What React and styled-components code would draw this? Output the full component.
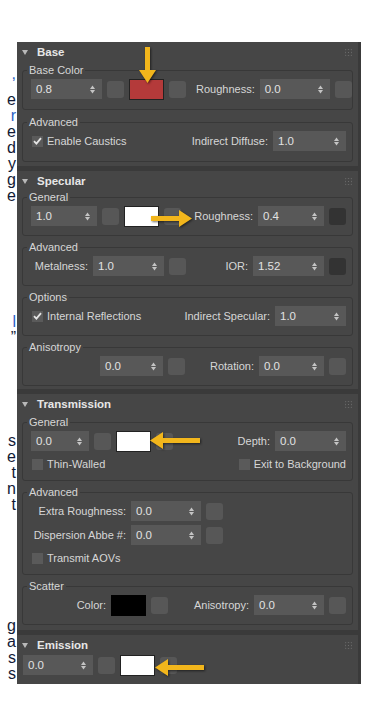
import React from 'react';
import styled, { createGlobalStyle } from 'styled-components';

const GlobalStyle = createGlobalStyle`
  html, body {
    margin: 0;
    padding: 0;
    background: #ffffff;
  }
  body {
    font-family: "Liberation Sans", Arial, sans-serif;
  }
`;

const Page = styled.div`
  display: flex;
  align-items: flex-start;
  width: 389px;
  height: 707px;
  overflow: hidden;
  background: #ffffff;
`;

// clipped right edge of the document text next to the screenshot
const Gutter = styled.div`
  flex: none;
  width: 17px;
  box-sizing: border-box;
  padding-right: 1px;
  overflow: hidden;
  font-size: 16px;
  line-height: 16px;
  color: #111a36;
  text-align: right;
`;

const Snippet = styled.div`
  margin-top: ${p => p.$top}px;
`;

const Char = styled.div`
  height: 16px;
  color: ${p => (p.$blue ? '#2a62c6' : 'inherit')};
`;

const Panel = styled.div`
  position: relative;
  flex: none;
  width: 344px;
  margin-top: 42px;
  box-sizing: border-box;
  background: #464646;
  border-right: 3px solid #3a3a3a;
  color: #d6d6d6;
  font-size: 11px;
`;

const Rollout = styled.section`
  padding: 0 5px ${p => p.$pb ?? 3}px 5px;
  border-top: ${p => (p.$first ? 'none' : '5px solid #3a3a3a')};
`;

const RolloutHeader = styled.header`
  display: flex;
  align-items: center;
  height: 20px;
  gap: 9px;
  font-weight: bold;
  font-size: 11.5px;
  color: #e6e6e6;
`;

const Caret = styled.span`
  width: 0;
  height: 0;
  border-left: 3px solid transparent;
  border-right: 3px solid transparent;
  border-top: 5px solid #b8b8b8;
`;

const Grip = styled.svg`
  margin-left: auto;
  margin-right: 1px;
`;

const Body = styled.div`
  display: flex;
  flex-direction: column;
  gap: ${p => p.$gap ?? 5}px;
  padding-top: ${p => p.$pt ?? 2}px;
`;

const Group = styled.fieldset`
  margin: 0;
  min-width: 0;
  border: 1px solid #383838;
  border-radius: 3px;
  padding: 3px 6px ${p => p.$pb ?? 9}px 8px;
  display: flex;
  flex-direction: column;
  gap: 4px;
`;

const Legend = styled.legend`
  margin-left: -4px;
  padding: 0 2px;
  line-height: 12px;
  color: #d6d6d6;
`;

const Row = styled.div`
  display: flex;
  align-items: center;
  gap: 5px;
  height: ${p => p.$h ?? 20}px;
  padding-left: ${p => p.$indent ?? 0}px;
`;

const Push = styled.div`
  flex: 1;
`;

const Label = styled.span`
  flex: none;
  width: ${p => (p.$w ? `${p.$w}px` : 'auto')};
  text-align: right;
  white-space: nowrap;
`;

const SpinBox = styled.div`
  flex: none;
  width: ${p => p.$w}px;
  height: 20px;
  box-sizing: border-box;
  display: flex;
  align-items: center;
  justify-content: space-between;
  padding: 0 7px 0 5px;
  background: #585858;
  color: #e2e2e2;
  font-size: 11.5px;
`;

const Knob = styled.div`
  flex: none;
  width: 17px;
  height: 17px;
  border-radius: 3px;
  background: ${p => (p.$dark ? '#333333' : '#575757')};
`;

const Swatch = styled.div`
  flex: none;
  width: 35px;
  height: 21px;
  box-sizing: border-box;
  background: ${p => p.$color};
  border: 1px solid ${p => (p.$color === '#000000' ? '#000000' : '#222222')};
`;

const CheckLabel = styled.label`
  display: flex;
  align-items: center;
  gap: 4px;
  white-space: nowrap;
  padding-left: 1px;
`;

const CheckBox = styled.span`
  flex: none;
  display: flex;
  align-items: center;
  justify-content: center;
  width: 11px;
  height: 11px;
  background: #5a5a5a;
`;

const Pointer = styled.svg`
  position: absolute;
  left: ${p => p.$x}px;
  top: ${p => p.$y}px;
  filter: drop-shadow(1px 1px 1px rgba(0, 0, 0, 0.55));
`;

const Spinner = ({ value, w }) => (
  <SpinBox $w={w}>
    <span>{value}</span>
    <svg width="5" height="9" viewBox="0 0 5 9">
      <polygon points="0,4 2.5,0.5 5,4" fill="#c4c4c4" />
      <polygon points="0,5 5,5 2.5,8.5" fill="#c4c4c4" />
    </svg>
  </SpinBox>
);

const Check = ({ label, checked }) => (
  <CheckLabel>
    <CheckBox>
      {checked && (
        <svg width="9" height="8" viewBox="0 0 9 8">
          <polyline points="1,4.2 3.4,6.6 8,1.2" fill="none" stroke="#e4e4e4" strokeWidth="1.8" />
        </svg>
      )}
    </CheckBox>
    {label}
  </CheckLabel>
);

const Header = ({ title }) => (
  <RolloutHeader>
    <Caret />
    {title}
    <Grip width="7" height="7" viewBox="0 0 7 7">
      {[0, 3, 6].map(x =>
        [0, 3, 6].map(y => <rect key={`${x}-${y}`} x={x} y={y} width="1" height="1" fill="#6c6c6c" />)
      )}
      <rect x="0" y="0" width="7" height="7" fill="none" stroke="#575757" strokeWidth="0.6" />
    </Grip>
  </RolloutHeader>
);

// yellow callout arrows laid over the screenshot
const Arrow = ({ dir, x, y, len }) => {
  const t = 5;
  const hw = 17;
  const hl = 13;
  const a = (hw - t) / 2;
  let pts;
  let w = len;
  let h = hw;
  if (dir === 'right') {
    pts = `0,${a} ${len - hl},${a} ${len - hl},0 ${len},${hw / 2} ${len - hl},${hw} ${len - hl},${a + t} 0,${a + t}`;
  } else if (dir === 'left') {
    pts = `${len},${a} ${hl},${a} ${hl},0 0,${hw / 2} ${hl},${hw} ${hl},${a + t} ${len},${a + t}`;
  } else {
    w = hw;
    h = len;
    pts = `${a},0 ${a + t},0 ${a + t},${len - hl} ${hw},${len - hl} ${hw / 2},${len} 0,${len - hl} ${a},${len - hl}`;
  }
  return (
    <Pointer $x={x} $y={y} width={w + 3} height={h + 3} viewBox={`0 0 ${w + 3} ${h + 3}`}>
      <polygon points={pts} fill="#f2b61c" />
    </Pointer>
  );
};

const gutterText = [
  { top: 66, chars: [[',', true]] },
  { top: 10, chars: [['e'], ['r', true], ['e'], ['d'], ['y'], ['g'], ['e']] },
  { top: 110, chars: [['l', true], ['”']] },
  { top: 87, chars: [['s'], ['e'], ['t'], ['n'], ['t']] },
  { top: 105, chars: [['g'], ['a'], ['s'], ['s']] },
];

const App = () => (
  <Page>
    <GlobalStyle />
    <Gutter>
      {gutterText.map((block, i) => (
        <Snippet key={i} $top={block.top}>
          {block.chars.map(([c, blue], j) => (
            <Char key={j} $blue={blue}>{c}</Char>
          ))}
        </Snippet>
      ))}
    </Gutter>

    <Panel>
      <Rollout $first $pb={4}>
        <Header title="Base" />
        <Body $gap={6}>
          <Group $pb={10}>
            <Legend>Base Color</Legend>
            <Row>
              <Spinner value="0.8" w={71} />
              <Knob />
              <Swatch $color="#b43a3a" />
              <Knob />
              <Push />
              <Label>Roughness:</Label>
              <Spinner value="0.0" w={70} />
              <Knob />
            </Row>
          </Group>
          <Group $pb={10}>
            <Legend>Advanced</Legend>
            <Row>
              <Check checked label="Enable Caustics" />
              <Push />
              <Label>Indirect Diffuse:</Label>
              <Spinner value="1.0" w={73} />
            </Row>
          </Group>
        </Body>
      </Rollout>

      <Rollout>
        <Header title="Specular" />
        <Body $pt={0}>
          <Group>
            <Legend>General</Legend>
            <Row>
              <Spinner value="1.0" w={66} />
              <Knob />
              <Swatch $color="#ffffff" />
              <Knob />
              <Push />
              <Label>Roughness:</Label>
              <Spinner value="0.4" w={66} />
              <Knob $dark />
            </Row>
          </Group>
          <Group>
            <Legend>Advanced</Legend>
            <Row>
              <Label $w={57}>Metalness:</Label>
              <Spinner value="1.0" w={71} />
              <Knob />
              <Push />
              <Label>IOR:</Label>
              <Spinner value="1.52" w={71} />
              <Knob $dark />
            </Row>
          </Group>
          <Group>
            <Legend>Options</Legend>
            <Row>
              <Check checked label="Internal Reflections" />
              <Push />
              <Label>Indirect Specular:</Label>
              <Spinner value="1.0" w={71} />
            </Row>
          </Group>
          <Group>
            <Legend>Anisotropy</Legend>
            <Row>
              <Label $w={64} />
              <Spinner value="0.0" w={63} />
              <Knob />
              <Push />
              <Label>Rotation:</Label>
              <Spinner value="0.0" w={65} />
              <Knob />
            </Row>
          </Group>
        </Body>
      </Rollout>

      <Rollout $pb={5}>
        <Header title="Transmission" />
        <Body>
          <Group $pb={7}>
            <Legend>General</Legend>
            <Row>
              <Spinner value="0.0" w={58} />
              <Knob />
              <Swatch $color="#ffffff" />
              <Knob />
              <Push />
              <Label>Depth:</Label>
              <Spinner value="0.0" w={71} />
            </Row>
            <Row $h={18}>
              <Check label="Thin-Walled" />
              <Push />
              <Check label="Exit to Background" />
            </Row>
          </Group>
          <Group $pb={7}>
            <Legend>Advanced</Legend>
            <Row>
              <Label $w={95}>Extra Roughness:</Label>
              <Spinner value="0.0" w={70} />
              <Knob />
            </Row>
            <Row>
              <Label $w={95}>Dispersion Abbe #:</Label>
              <Spinner value="0.0" w={70} />
              <Knob />
            </Row>
            <Row $h={18}>
              <Check label="Transmit AOVs" />
            </Row>
          </Group>
          <Group>
            <Legend>Scatter</Legend>
            <Row>
              <Label $w={75}>Color:</Label>
              <Swatch $color="#000000" />
              <Knob />
              <Push />
              <Label>Anisotropy:</Label>
              <Spinner value="0.0" w={70} />
              <Knob />
            </Row>
          </Group>
        </Body>
      </Rollout>

      <Rollout $pb={9}>
        <Header title="Emission" />
        <Row $indent={1}>
          <Spinner value="0.0" w={70} />
          <Knob />
          <Swatch $color="#ffffff" />
          <Knob />
        </Row>
      </Rollout>

      <Arrow dir="down" x={122} y={5} len={36} />
      <Arrow dir="right" x={134} y={168} len={41} />
      <Arrow dir="left" x={133} y={390} len={50} />
      <Arrow dir="left" x={138} y={617} len={49} />
    </Panel>
  </Page>
);

export default App;
